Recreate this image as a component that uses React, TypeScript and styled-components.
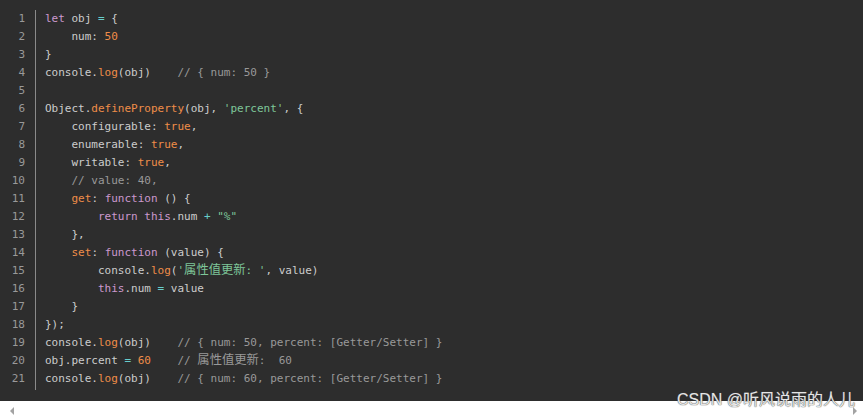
import React from "react";
import styled, { createGlobalStyle } from "styled-components";

const Global = createGlobalStyle`
  html, body { margin: 0; padding: 0; background: #ffffff; }
  body { width: 863px; height: 415px; overflow: hidden; }
`;

type Tok = "p" | "k" | "f" | "n" | "s" | "o" | "c";
type Seg = [Tok, string];

const colors: Record<Tok, string> = {
  p: "#cccccc",
  k: "#cc99cd",
  f: "#f08d49",
  n: "#f08d49",
  s: "#7ec699",
  o: "#67cdcc",
  c: "#999999",
};

const lines: Seg[][] = [
  [["k", "let"], ["p", " obj "], ["o", "="], ["p", " {"]],
  [["p", "    num: "], ["n", "50"]],
  [["p", "}"]],
  [["p", "console."], ["f", "log"], ["p", "(obj)    "], ["c", "// { num: 50 }"]],
  [],
  [["p", "Object."], ["f", "defineProperty"], ["p", "(obj, "], ["s", "'percent'"], ["p", ", {"]],
  [["p", "    configurable: "], ["n", "true"], ["p", ","]],
  [["p", "    enumerable: "], ["n", "true"], ["p", ","]],
  [["p", "    writable: "], ["n", "true"], ["p", ","]],
  [["p", "    "], ["c", "// value: 40,"]],
  [["p", "    "], ["f", "get"], ["p", ": "], ["k", "function"], ["p", " () {"]],
  [["p", "        "], ["k", "return"], ["p", " "], ["k", "this"], ["p", ".num "], ["o", "+"], ["p", " "], ["s", "\"%\""]],
  [["p", "    },"]],
  [["p", "    "], ["f", "set"], ["p", ": "], ["k", "function"], ["p", " (value) {"]],
  [["p", "        console."], ["f", "log"], ["p", "("], ["s", "'属性值更新: '"], ["p", ", value)"]],
  [["p", "        "], ["k", "this"], ["p", ".num "], ["o", "="], ["p", " value"]],
  [["p", "    }"]],
  [["p", "});"]],
  [["p", "console."], ["f", "log"], ["p", "(obj)    "], ["c", "// { num: 50, percent: [Getter/Setter] }"]],
  [["p", "obj.percent "], ["o", "="], ["p", " "], ["n", "60"], ["p", "    "], ["c", "// 属性值更新:  60"]],
  [["p", "console."], ["f", "log"], ["p", "(obj)    "], ["c", "// { num: 60, percent: [Getter/Setter] }"]],
];

const Page = styled.div`
  position: relative;
  width: 863px;
  height: 415px;
  overflow: hidden;
`;

const CodeBlock = styled.div`
  display: flex;
  background: #2d2d2d;
  padding: 10px 0 11px 0;
  font-family: "DejaVu Sans Mono", "Liberation Mono", monospace;
  font-size: 11px;
  line-height: 18px;
`;

const Gutter = styled.div`
  width: 25px;
  padding-right: 10px;
  border-right: 1px solid #8a8a8a;
  display: flex;
  flex-direction: column;
  align-items: flex-end;
  color: #999999;
  padding-bottom: 2px;
`;

const LineNo = styled.div`
  height: 18px;
`;

const Code = styled.div`
  padding-left: 9px;
  display: flex;
  flex-direction: column;
`;

const Line = styled.div`
  height: 18px;
  white-space: pre;
  color: #cccccc;
`;

const Token = styled.span<{ $c: string }>`
  color: ${(p) => p.$c};
`;

const Cjk = styled.span`
  font-family: "Noto Sans CJK SC", sans-serif;
  font-size: 12.3px;
  line-height: 1;
`;

const Scrollbar = styled.div`
  height: 16px;
  background: #ffffff;
  display: flex;
  align-items: center;
  justify-content: space-between;
  padding: 2px 6px 0 10px;
`;

const ArrowLeft = styled.div`
  width: 0;
  height: 0;
  border-top: 4px solid transparent;
  border-bottom: 4px solid transparent;
  border-right: 4px solid #a3a3a3;
`;

const ArrowRight = styled.div`
  width: 0;
  height: 0;
  border-top: 4px solid transparent;
  border-bottom: 4px solid transparent;
  border-left: 4px solid #a3a3a3;
`;

const Watermark = styled.div`
  position: absolute;
  right: 8px;
  top: 390px;
  font-family: "Liberation Sans", "Noto Sans CJK SC", sans-serif;
  font-size: 16px;
  line-height: 20px;
  color: rgba(245, 245, 245, 0.92);
  text-shadow: 0 0 1px #555, 0 0 1px #555;
  white-space: nowrap;
`;

const cjkRe = /([\u4e00-\u9fff]+)/;

function renderText(text: string) {
  const parts = text.split(cjkRe);
  return parts.map((part, i) =>
    cjkRe.test(part) ? <Cjk key={i}>{part}</Cjk> : <React.Fragment key={i}>{part}</React.Fragment>
  );
}

export default function App() {
  return (
    <Page>
      <Global />
      <CodeBlock>
        <Gutter>
          {lines.map((_, i) => (
            <LineNo key={i}>{i + 1}</LineNo>
          ))}
        </Gutter>
        <Code>
          {lines.map((segs, i) => (
            <Line key={i}>
              {segs.map(([t, text], j) => (
                <Token key={j} $c={colors[t]}>
                  {renderText(text)}
                </Token>
              ))}
            </Line>
          ))}
        </Code>
      </CodeBlock>
      <Scrollbar>
        <ArrowLeft />
        <ArrowRight />
      </Scrollbar>
      <Watermark>CSDN @听风说雨的人儿</Watermark>
    </Page>
  );
}
